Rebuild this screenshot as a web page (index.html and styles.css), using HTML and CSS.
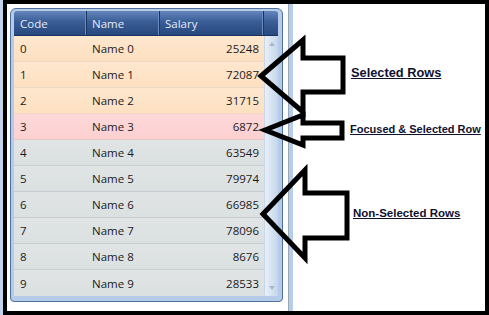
FILE: index.html
```html
<!DOCTYPE html>
<html lang="en">

<head>
    <meta charset="utf-8">
    <title>Grid rows</title>
    <link rel="stylesheet" href="styles.css">
</head>

<body>
    <div class="page">
        <div class="edge"></div>
        <div class="canvas">
            <div class="grid">
                <div class="head">
                    <div class="hc code">Code</div>
                    <div class="hc name">Name</div>
                    <div class="hc salary">Salary</div>
                    <div class="hc bar"></div>
                </div>
                <div class="body">
                    <div class="rows">
                        <div class="row sel"><span class="code">0</span><span class="name">Name 0</span><span class="salary">25248</span></div>
                        <div class="row sel"><span class="code">1</span><span class="name">Name 1</span><span class="salary">72087</span></div>
                        <div class="row sel"><span class="code">2</span><span class="name">Name 2</span><span class="salary">31715</span></div>
                        <div class="row focus"><span class="code">3</span><span class="name">Name 3</span><span class="salary">6872</span></div>
                        <div class="row"><span class="code">4</span><span class="name">Name 4</span><span class="salary">63549</span></div>
                        <div class="row"><span class="code">5</span><span class="name">Name 5</span><span class="salary">79974</span></div>
                        <div class="row"><span class="code">6</span><span class="name">Name 6</span><span class="salary">66985</span></div>
                        <div class="row"><span class="code">7</span><span class="name">Name 7</span><span class="salary">78096</span></div>
                        <div class="row"><span class="code">8</span><span class="name">Name 8</span><span class="salary">8676</span></div>
                        <div class="row"><span class="code">9</span><span class="name">Name 9</span><span class="salary">28533</span></div>
                    </div>
                    <div class="scroll">
                        <span class="up"></span>
                        <span class="down"></span>
                    </div>
                </div>
            </div>
            <div class="sep"></div>
        </div>

        <!-- annotations drawn over the grid -->
        <svg class="arrows" width="489" height="315" viewBox="0 0 489 315">
            <polygon points="261,76 303,40 303,58 343,58 343,92 303,92 303,112" />
            <polygon points="265,130 303,115 303,123 342,123 342,138 303,138 303,145" />
            <polygon points="263,214 305,170 305,193 347,193 347,238 305,238 305,258" />
        </svg>
        <p class="note n1">Selected Rows</p>
        <p class="note n2">Focused &amp; Selected Row</p>
        <p class="note n3">Non-Selected Rows</p>
    </div>
</body>

</html>
```

FILE: styles.css
```css
/* page frame */

body {
    margin: 0;
    background-color: white;
}

.page {
    position: relative;
    display: flex;
    width: 489px;
    height: 315px;
}

.edge {
    width: 3px;
    background-color: #c3d3e9;
}

.canvas {
    flex: 1;
    display: flex;
    align-items: flex-start;
    border: 4px solid black;
    background-color: white;
}

.sep {
    align-self: stretch;
    width: 4px;
    margin-left: 5px;
    border-left: 1px solid #9aa7b8;
    background-color: #b8cde8;
}

/* grid panel */

.grid {
    margin: 4px 0 0 3px;
    padding: 2px 4px 5px 3px;
    border: 1px solid #4f6f9f;
    border-radius: 6px 6px 4px 4px;
    background-color: #b6cbe7;
    font-family: "Open Sans", sans-serif;
    font-size: 11.5px;
}

.head {
    display: flex;
    height: 25px;
    background: linear-gradient(#6486bd, #3b5d96 45%, #27497f);
    border-radius: 3px 3px 0 0;
    border-bottom: 1px solid #1b335c;
    box-sizing: border-box;
}

.hc {
    display: flex;
    align-items: center;
    padding-left: 6px;
    color: #e2ecfb;
    border-right: 1px solid #1d3762;
    box-shadow: inset -1px 0 0 #6a8ac0;
    box-sizing: border-box;
}

.hc.code {
    width: 73px;
}

.hc.name {
    width: 73px;
    padding-left: 5px;
}

.hc.salary {
    width: 104px;
    padding-left: 5px;
}

.hc.bar {
    width: 13px;
    border-right: none;
    box-shadow: none;
}

.body {
    display: flex;
}

.rows {
    width: 250px;
}

.row {
    display: flex;
    height: 26px;
    align-items: center;
    box-sizing: border-box;
    border-bottom: 1px solid #c7ccd3;
    background: linear-gradient(#e0e4e5, #dbe0e1);
    color: #1b1b1b;
}

.row:last-child {
    border-bottom: none;
}

.row.sel {
    background: linear-gradient(#fee7cf, #fde0c0);
    border-bottom-color: #ecd8c4;
}

.row.focus {
    background: linear-gradient(#fdd8d9, #fcd0d1);
    border-bottom-color: #e3c6c8;
}

.row .code {
    width: 73px;
    padding-left: 6px;
    box-sizing: border-box;
}

.row .name {
    width: 73px;
    padding-left: 5px;
    box-sizing: border-box;
}

.row .salary {
    width: 104px;
    padding-right: 5px;
    text-align: right;
    box-sizing: border-box;
}

.scroll {
    width: 13px;
    display: flex;
    flex-direction: column;
    justify-content: space-between;
    align-items: center;
    padding: 6px 0;
    background: linear-gradient(90deg, #e8eff8, #d3e0f0 60%, #c4d5eb);
    border-left: 1px solid #c9d6e6;
}

.up {
    border-left: 3px solid transparent;
    border-right: 3px solid transparent;
    border-bottom: 4px solid #a7b7cc;
}

.down {
    border-left: 3px solid transparent;
    border-right: 3px solid transparent;
    border-top: 4px solid #a7b7cc;
}

/* arrows and labels */

.arrows {
    position: absolute;
    left: 0;
    top: 0;
}

.arrows polygon {
    fill: none;
    stroke: black;
    stroke-width: 5;
    stroke-linejoin: miter;
}

.note {
    position: absolute;
    margin: 0;
    font-family: "Liberation Sans", Arial, sans-serif;
    font-weight: bold;
    color: #10112e;
    text-decoration: underline;
    line-height: 1;
}

.n1 {
    left: 351px;
    top: 67px;
    font-size: 12.8px;
}

.n2 {
    left: 350px;
    top: 124px;
    font-size: 11px;
}

.n3 {
    left: 353px;
    top: 208px;
    font-size: 11.5px;
}
```
